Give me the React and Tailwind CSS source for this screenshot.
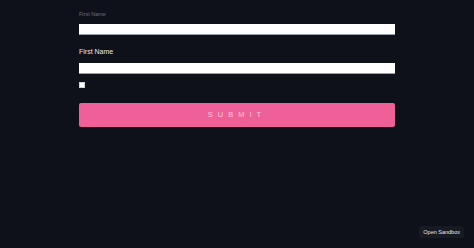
import React from "react";

export default function App() {
  return (
    <div
      className="relative w-[474px] h-[248px] bg-[#0f111a] overflow-hidden"
      style={{ fontFamily: '"Liberation Sans", Arial, sans-serif' }}
    >
      <form className="w-[316px] ml-[79px] pt-[11px] flex flex-col">
        {/* Floating label field */}
        <label className="text-[5.5px] leading-[6px] text-[#6b6f7e]">First Name</label>
        <input className="mt-[7px] h-[11px] w-full bg-white border-b border-[#9aa0aa] outline-none" />

        {/* Regular label field */}
        <label className="mt-[13px] text-[7px] leading-[8px] text-[#e5e7eb]">First Name</label>
        <input className="mt-[7px] h-[11px] w-full bg-white border-b border-[#9aa0aa] outline-none" />

        <div className="mt-[8px] w-[6px] h-[6px] bg-white border border-[#cfd2d8]"></div>

        <button
          type="button"
          className="mt-[15px] h-[24px] w-full bg-[#ef5f98] rounded-[2px] text-[#f9c9dc] text-[7.5px] tracking-[5px] flex items-center justify-center"
        >
          SUBMIT
        </button>
      </form>

      {/* Overlay button */}
      <div className="absolute right-[10px] bottom-[10px] h-[12px] px-[4px] rounded-[2px] bg-[#171923] text-[#e8e8ea] text-[5.5px] flex items-center">
        Open Sandbox
      </div>
    </div>
  );
}
